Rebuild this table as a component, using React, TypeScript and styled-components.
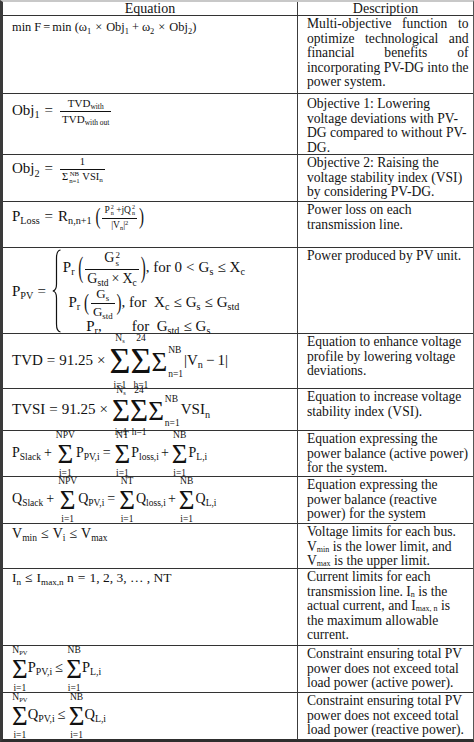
import React from 'react';
import styled, { createGlobalStyle } from 'styled-components';

const GlobalStyle = createGlobalStyle`
  html, body {
    margin: 0;
    padding: 0;
    background: #fff;
  }
  body {
    font-family: 'Liberation Serif', 'Times New Roman', serif;
    color: #141414;
  }
`;

// Table frame
const Table = styled.div`
  width: 474px;
  box-sizing: border-box;
  border-top: 2px solid #c8c8c8;
  border-left: 3px solid #3a3a3a;
  border-right: 1px solid #555;
  border-bottom: 3px solid #2e2e2e;
`;

const Row = styled.div<{ $h: number; $last?: boolean }>`
  display: grid;
  grid-template-columns: 295px 1fr;
  height: ${(p) => p.$h}px;
  box-sizing: border-box;
  border-bottom: ${(p) => (p.$last ? 'none' : '1px solid #333')};
`;

const HeadCell = styled.div<{ $divider?: boolean }>`
  font-size: 14px;
  line-height: 13px;
  text-align: center;
  box-sizing: border-box;
  border-right: ${(p) => (p.$divider ? '1px solid #3c3c3c' : 'none')};
`;

const EqCell = styled.div`
  box-sizing: border-box;
  border-right: 1px solid #3c3c3c;
  padding-left: 9px;
  min-width: 0;
`;

const DescCell = styled.div<{ $top: number }>`
  box-sizing: border-box;
  padding: ${(p) => p.$top}px 5px 0 9px;
  font-size: 13.6px;
  line-height: 14.5px;
`;

const DescLine = styled.div<{ $justify?: boolean }>`
  white-space: nowrap;
  text-align: ${(p) => (p.$justify ? 'justify' : 'left')};
  text-align-last: ${(p) => (p.$justify ? 'justify' : 'auto')};
`;

const DescSub = styled.span`
  font-size: 8px;
  vertical-align: -1px;
  line-height: 0;
`;

// Math typesetting parts
const Eq = styled.div<{ $top: number; $size: number }>`
  margin-top: ${(p) => p.$top}px;
  font-size: ${(p) => p.$size}px;
  line-height: 20px;
  white-space: nowrap;
  color: #111;
`;

const Sub = styled.span`
  font-size: 0.68em;
  vertical-align: -0.32em;
  line-height: 0;
`;

const Sup = styled.span`
  font-size: 0.68em;
  vertical-align: 0.5em;
  line-height: 0;
`;

const Scripts = styled.span`
  display: inline-flex;
  flex-direction: column;
  vertical-align: middle;
  font-size: 0.64em;
  line-height: 0.95;
  margin-left: 1px;
`;

const Op = styled.span<{ $gap?: number }>`
  margin: 0 ${(p) => p.$gap ?? 4}px;
`;

const FracBox = styled.span<{ $size: number }>`
  display: inline-flex;
  flex-direction: column;
  align-items: center;
  vertical-align: middle;
  font-size: ${(p) => p.$size}px;
  line-height: 1.15;
  margin: 0 2px;
`;

const FracNum = styled.span`
  padding: 0 2px 1px;
`;

const FracDen = styled.span`
  align-self: stretch;
  text-align: center;
  padding: 1px 2px 0;
  border-top: 1px solid #111;
`;

const Paren = styled.span<{ $scale: number }>`
  display: inline-block;
  transform: scaleY(${(p) => p.$scale});
`;

const SumStack = styled.span<{ $gap?: number }>`
  display: inline-flex;
  flex-direction: column;
  align-items: center;
  vertical-align: middle;
  margin: 0 ${(p) => p.$gap ?? 1}px;
`;

const SideStack = styled.span`
  display: inline-flex;
  align-items: center;
  vertical-align: middle;
  margin: 0 1px 0 0;
`;

const Limit = styled.span<{ $above?: boolean }>`
  font-size: 9.5px;
  line-height: 10px;
  margin-bottom: ${(p) => (p.$above ? 2 : 0)}px;
`;

const SideLimits = styled.span<{ $h: number }>`
  display: inline-flex;
  flex-direction: column;
  justify-content: space-between;
  height: ${(p) => p.$h}px;
  margin-left: 1px;
`;

const Sigma = styled.span<{ $size: number }>`
  font-size: ${(p) => p.$size}px;
  line-height: ${(p) => p.$size - 1}px;
  margin: -1px 0 1px;
`;

const SideSigma = styled.span<{ $size: number }>`
  font-size: ${(p) => p.$size}px;
  line-height: ${(p) => Math.round(p.$size * 0.9)}px;
`;

const Piecewise = styled.div`
  display: flex;
  align-items: center;
  height: 84px;
`;

const Label = styled.span`
  margin-right: 2px;
`;

const Cases = styled.div`
  display: flex;
  flex-direction: column;
  align-items: center;
  margin-left: 2px;
`;

const CaseLine = styled.div<{ $h: number }>`
  height: ${(p) => p.$h}px;
  line-height: ${(p) => p.$h}px;
  white-space: nowrap;
`;

const Frac = ({ num, den, size }: { num: React.ReactNode; den: React.ReactNode; size: number }) => (
  <FracBox $size={size}>
    <FracNum>{num}</FracNum>
    <FracDen>{den}</FracDen>
  </FracBox>
);

const Sum = ({ top, bottom, size, gap }: { top: React.ReactNode; bottom: React.ReactNode; size: number; gap?: number }) => (
  <SumStack $gap={gap}>
    <Limit $above>{top}</Limit>
    <Sigma $size={size}>Σ</Sigma>
    <Limit>{bottom}</Limit>
  </SumStack>
);

const SideSum = ({ top, bottom, size }: { top: React.ReactNode; bottom: React.ReactNode; size: number }) => (
  <SideStack>
    <SideSigma $size={size}>Σ</SideSigma>
    <SideLimits $h={34}>
      <Limit>{top}</Limit>
      <Limit>{bottom}</Limit>
    </SideLimits>
  </SideStack>
);

const Brace = () => (
  <svg width="9" height="84" viewBox="0 0 9 84">
    <path
      d="M8.5 1 Q4.5 1.5 4.5 9 L4.5 35 Q4.5 41.5 0.8 42 Q4.5 42.5 4.5 49 L4.5 75 Q4.5 82.5 8.5 83"
      fill="none"
      stroke="#111"
      strokeWidth="1.2"
    />
  </svg>
);

const PScripts = ({ sup, sub }: { sup: string; sub: string }) => (
  <Scripts>
    <span>{sup}</span>
    <span>{sub}</span>
  </Scripts>
);

type RowData = {
  h: number;
  eqTop: number;
  size: number;
  eq: React.ReactNode;
  desc: React.ReactNode[];
  descTop?: number;
  justify?: boolean;
};

const Ns = () => (
  <>
    N<Sub>s</Sub>
  </>
);

const Npv = () => (
  <>
    N<Sub>PV</Sub>
  </>
);

const rows: RowData[] = [
  {
    h: 78,
    eqTop: 1,
    size: 12.4,
    justify: true,
    eq: (
      <>
        min F<Op $gap={2}>=</Op>min (ω<Sub>1</Sub>
        <Op $gap={4}>×</Op>Obj<Sub>1</Sub>
        <Op $gap={3}>+</Op>ω<Sub>2</Sub>
        <Op $gap={4}>×</Op>Obj<Sub>2</Sub>)
      </>
    ),
    desc: [
      'Multi-objective function to',
      'optimize technological and',
      'financial benefits of',
      'incorporating PV-DG into the',
      'power system.',
    ],
  },
  {
    h: 61,
    eqTop: 3,
    size: 15,
    descTop: 3,
    eq: (
      <>
        Obj<Sub>1</Sub>
        <Op $gap={5}>=</Op>
        <Frac
          size={11}
          num={
            <>
              TVD<Sub>with</Sub>
            </>
          }
          den={
            <>
              TVD<Sub>with out</Sub>
            </>
          }
        />
      </>
    ),
    desc: ['Objective 1: Lowering', 'voltage deviations with PV-', 'DG compared to without PV-', 'DG.'],
  },
  {
    h: 47,
    eqTop: 1,
    size: 15,
    eq: (
      <>
        Obj<Sub>2</Sub>
        <Op $gap={5}>=</Op>
        <Frac
          size={10.5}
          num="1"
          den={
            <>
              Σ<PScripts sup="NB" sub="n=1" /> VSI<Sub>n</Sub>
            </>
          }
        />
      </>
    ),
    desc: ['Objective 2: Raising the', 'voltage stability index (VSI)', 'by considering PV-DG.'],
  },
  {
    h: 46,
    eqTop: 3,
    size: 15,
    eq: (
      <>
        P<Sub>Loss</Sub>
        <Op $gap={5}>=</Op>R<Sub>n,n+1</Sub>{' '}
        <Paren $scale={1.6}>(</Paren>
        <Frac
          size={9.5}
          num={
            <>
              P<PScripts sup="2" sub="n" /> +jQ<PScripts sup="2" sub="n" />
            </>
          }
          den={
            <>
              |V<Sub>n</Sub>|<Sup>2</Sup>
            </>
          }
        />
        <Paren $scale={1.6}>)</Paren>
      </>
    ),
    desc: ['Power loss on each', 'transmission line.'],
  },
  {
    h: 86,
    eqTop: 1,
    size: 15,
    eq: (
      <Piecewise>
        <Label>
          P<Sub>PV</Sub>
          <Op $gap={4}>=</Op>
        </Label>
        <Brace />
        <Cases>
          <CaseLine $h={36}>
            P<Sub>r</Sub> <Paren $scale={1.9}>(</Paren>
            <Frac
              size={14}
              num={
                <>
                  G<PScripts sup="2" sub="s" />
                </>
              }
              den={
                <>
                  G<Sub>std</Sub>
                  <Op $gap={3}>×</Op>X<Sub>c</Sub>
                </>
              }
            />
            <Paren $scale={1.9}>)</Paren>, for 0<Op $gap={4}>&lt;</Op>G<Sub>s</Sub>
            <Op $gap={4}>≤</Op>X<Sub>c</Sub>
          </CaseLine>
          <CaseLine $h={34}>
            P<Sub>r</Sub> <Paren $scale={1.6}>(</Paren>
            <Frac
              size={13}
              num={
                <>
                  G<Sub>s</Sub>
                </>
              }
              den={
                <>
                  G<Sub>std</Sub>
                </>
              }
            />
            <Paren $scale={1.6}>)</Paren>, for&nbsp; X<Sub>c</Sub>
            <Op $gap={4}>≤</Op>G<Sub>s</Sub>
            <Op $gap={4}>≤</Op>G<Sub>std</Sub>
          </CaseLine>
          <CaseLine $h={14}>
            &nbsp;&nbsp;&nbsp;P<Sub>r</Sub>,&nbsp;&nbsp;&nbsp;&nbsp;&nbsp;&nbsp;&nbsp;&nbsp;for&nbsp; G<Sub>std</Sub>
            <Op $gap={4}>≤</Op>G<Sub>s</Sub>&nbsp;&nbsp;&nbsp;&nbsp;&nbsp;&nbsp;
          </CaseLine>
        </Cases>
      </Piecewise>
    ),
    desc: ['Power produced by PV unit.'],
  },
  {
    h: 55,
    eqTop: -1,
    size: 15,
    eq: (
      <>
        TVD<Op $gap={4}>=</Op>91.25<Op $gap={4}>×</Op>
        <Sum size={36} top={<Ns />} bottom="i=1" gap={0} />
        <Sum size={36} top="24" bottom="h=1" gap={0} />
        <SideSum size={27} top="NB" bottom="n=1" />
        |V<Sub>n</Sub>
        <Op $gap={3}>−</Op>1|
      </>
    ),
    desc: ['Equation to enhance voltage', 'profile by lowering voltage', 'deviations.'],
  },
  {
    h: 42,
    eqTop: -4,
    size: 15,
    eq: (
      <>
        TVSI<Op $gap={4}>=</Op>91.25<Op $gap={4}>×</Op>
        <Sum size={31} top={<Ns />} bottom="i=1" gap={0} />
        <Sum size={31} top="24" bottom="h=1" gap={0} />
        <SideSum size={27} top="NB" bottom="n=1" />
        VSI<Sub>n</Sub>
      </>
    ),
    desc: ['Equation to increase voltage', 'stability index (VSI).'],
  },
  {
    h: 46,
    eqTop: -1,
    size: 14,
    eq: (
      <>
        P<Sub>Slack</Sub>
        <Op $gap={3}>+</Op>
        <Sum size={27} top="NPV" bottom="i=1" />
        P<Sub>PV,i</Sub>
        <Op $gap={3}>=</Op>
        <Sum size={27} top="NT" bottom="i=1" />
        P<Sub>loss,i</Sub>
        <Op $gap={2}>+</Op>
        <Sum size={27} top="NB" bottom="i=1" />
        P<Sub>L,i</Sub>
      </>
    ),
    desc: ['Equation expressing the', 'power balance (active power)', 'for the system.'],
  },
  {
    h: 47,
    eqTop: -1,
    size: 14,
    eq: (
      <>
        Q<Sub>Slack</Sub>
        <Op $gap={3}>+</Op>
        <Sum size={27} top="NPV" bottom="i=1" />
        Q<Sub>PV,i</Sub>
        <Op $gap={3}>=</Op>
        <Sum size={27} top="NT" bottom="i=1" />
        Q<Sub>loss,i</Sub>
        <Op $gap={2}>+</Op>
        <Sum size={27} top="NB" bottom="i=1" />
        Q<Sub>L,i</Sub>
      </>
    ),
    desc: ['Equation expressing the', 'power balance (reactive', 'power) for the system'],
  },
  {
    h: 45,
    eqTop: 0,
    size: 14,
    eq: (
      <>
        V<Sub>min</Sub>
        <Op $gap={4}>≤</Op>V<Sub>i</Sub>
        <Op $gap={4}>≤</Op>V<Sub>max</Sub>
      </>
    ),
    desc: [
      'Voltage limits for each bus.',
      <>
        V<DescSub>min</DescSub> is the lower limit, and
      </>,
      <>
        V<DescSub>max</DescSub> is the upper limit.
      </>,
    ],
  },
  {
    h: 77,
    eqTop: -1,
    size: 13.5,
    eq: (
      <>
        I<Sub>n</Sub>
        <Op $gap={4}>≤</Op>I<Sub>max,n</Sub> n<Op $gap={4}>=</Op>1, 2, 3, … , NT
      </>
    ),
    desc: [
      'Current limits for each',
      <>
        transmission line. I<DescSub>n</DescSub> is the
      </>,
      <>
        actual current, and I<DescSub>max, n</DescSub> is
      </>,
      'the maximum allowable',
      'current.',
    ],
  },
  {
    h: 47,
    eqTop: -1,
    size: 14.5,
    eq: (
      <>
        <Sum size={27} top={<Npv />} bottom="i=1" gap={0} />
        P<Sub>PV,i</Sub>
        <Op $gap={3}>≤</Op>
        <Sum size={27} top="NB" bottom="i=1" gap={0} />
        P<Sub>L,i</Sub>
      </>
    ),
    desc: ['Constraint ensuring total PV', 'power does not exceed total', 'load power (active power).'],
  },
  {
    h: 46,
    eqTop: -1,
    size: 14.5,
    eq: (
      <>
        <Sum size={27} top={<Npv />} bottom="i=1" gap={0} />
        Q<Sub>PV,i</Sub>
        <Op $gap={3}>≤</Op>
        <Sum size={27} top="NB" bottom="i=1" gap={0} />
        Q<Sub>L,i</Sub>
      </>
    ),
    desc: ['Constraint ensuring total PV', 'power does not exceed total', 'load power (reactive power).'],
  },
];

const App = () => {
  return (
    <>
      <GlobalStyle />
      <Table>
        <Row $h={14}>
          <HeadCell $divider>Equation</HeadCell>
          <HeadCell>Description</HeadCell>
        </Row>
        {rows.map((row, index) => (
          <Row key={index} $h={row.h} $last={index === rows.length - 1}>
            <EqCell>
              <Eq $top={row.eqTop} $size={row.size}>
                {row.eq}
              </Eq>
            </EqCell>
            <DescCell $top={row.descTop ?? 1}>
              {row.desc.map((line, i) => (
                <DescLine key={i} $justify={row.justify && i < row.desc.length - 1}>
                  {line}
                </DescLine>
              ))}
            </DescCell>
          </Row>
        ))}
      </Table>
    </>
  );
};

export default App;
